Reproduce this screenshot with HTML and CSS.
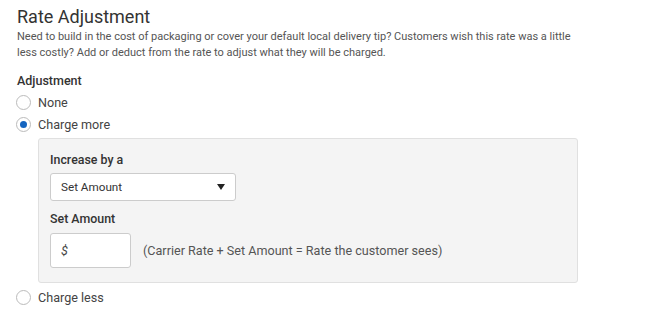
FILE: index.html
```html
<!DOCTYPE html>
<html lang="en">
  <head>
    <meta charset="UTF-8" />
    <meta name="viewport" content="width=device-width, initial-scale=1.0" />
    <title>Rate Adjustment</title>
    <link rel="stylesheet" href="styles.css">
  </head>
  <body>
    <div class="section">
      <h2 class="title">Rate Adjustment</h2>
      <p class="desc">
        Need to build in the cost of packaging or cover your default local delivery tip? Customers wish this rate was a little<br />
        less costly? Add or deduct from the rate to adjust what they will be charged.
      </p>

      <div class="group-label">Adjustment</div>

      <label class="radio-row">
        <span class="radio"></span>
        <span>None</span>
      </label>
      <label class="radio-row">
        <span class="radio checked"></span>
        <span>Charge more</span>
      </label>

      <!-- Opzioni per charge more -->
      <div class="panel">
        <div class="field-label">Increase by a</div>
        <div class="select">
          <span>Set Amount</span>
          <span class="caret"></span>
        </div>

        <div class="field-label second">Set Amount</div>
        <div class="amount-row">
          <div class="amount-input">$</div>
          <span class="hint">(Carrier Rate + Set Amount = Rate the customer sees)</span>
        </div>
      </div>

      <label class="radio-row">
        <span class="radio"></span>
        <span>Charge less</span>
      </label>
    </div>
  </body>
</html>
```

FILE: styles.css
```css
body,
html {
  margin: 0;
  padding: 0;
  background: #fff;
  font-family: Roboto, "Liberation Sans", Arial, sans-serif;
  color: #333;
}

.section {
  padding: 6px 0 0 17px;
  width: 561px;
}

.title {
  margin: 0;
  font-size: 18px;
  font-weight: 400;
  line-height: 22px;
  color: #333;
}

.desc {
  margin: 1px 0 0;
  font-size: 11px;
  line-height: 16px;
  color: #555;
  white-space: nowrap;
}

/* Etichetta gruppo */
.group-label {
  margin-top: 11px;
  font-size: 12.5px;
  font-weight: 500;
  line-height: 18px;
  color: #333;
}

.radio-row {
  display: flex;
  align-items: center;
  height: 22px;
  margin-top: 1px;
  font-size: 12.6px;
  color: #444;
}

.radio-row + .radio-row {
  margin-top: 0;
}

.radio {
  box-sizing: border-box;
  width: 15px;
  height: 15px;
  margin-left: -1px;
  margin-right: 7px;
  border: 1px solid #bbb;
  border-radius: 50%;
  background: #fff;
  position: relative;
}

.radio.checked::after {
  content: "";
  position: absolute;
  top: 3px;
  left: 3px;
  width: 7px;
  height: 7px;
  border-radius: 50%;
  background: #1565c0;
}

/* Pannello grigio */
.panel {
  margin: 3px 0 3px 21px;
  padding: 13px 11px 14px 11px;
  background-color: #f4f4f4;
  border: 1px solid #e0e0e0;
  border-radius: 3px;
}

.field-label {
  font-size: 12.4px;
  font-weight: 500;
  line-height: 16px;
  color: #333;
}

.field-label.second {
  margin-top: 10px;
}

.select {
  box-sizing: border-box;
  display: flex;
  align-items: center;
  justify-content: space-between;
  width: 186px;
  height: 28px;
  margin-top: 5px;
  padding: 0 10px 0 10px;
  background: #fff;
  border: 1px solid #ccc;
  border-radius: 3px;
  font-size: 11.7px;
  color: #333;
}

.caret {
  width: 0;
  height: 0;
  border-left: 4px solid transparent;
  border-right: 4px solid transparent;
  border-top: 6px solid #222;
}

.amount-row {
  display: flex;
  align-items: center;
  margin-top: 6px;
}

.amount-input {
  box-sizing: border-box;
  display: flex;
  align-items: center;
  width: 81px;
  height: 35px;
  padding-left: 10px;
  background: #fff;
  border: 1px solid #ccc;
  border-radius: 3px;
  font-size: 12.6px;
  font-style: italic;
  color: #444;
}

.hint {
  margin-left: 12px;
  font-size: 12.6px;
  color: #555;
}
```
